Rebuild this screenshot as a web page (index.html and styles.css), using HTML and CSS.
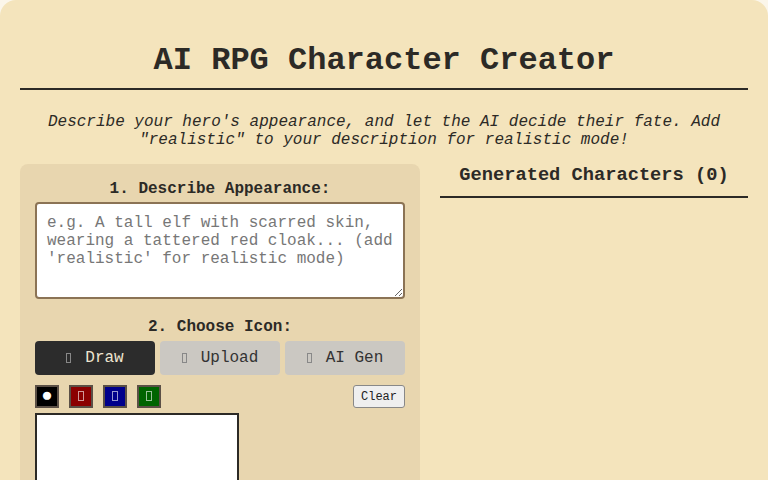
FILE: index.html
```html
<!DOCTYPE html>
<html lang="en">
<head>
  <meta charset="UTF-8" />
  <title>AI RPG Character Creator</title>
  <link rel="stylesheet" href="styles.css">
</head>
<body>
  <div class="container">
    <h1>AI RPG Character Creator</h1>
    <p class="intro">Describe your hero's appearance, and let the AI decide their fate. Add "realistic" to your description for realistic mode!</p>

    <div class="layout">
      <div class="creator">
        <label class="step" for="desc">1. Describe Appearance:</label>
        <textarea id="desc" placeholder="e.g. A tall elf with scarred skin, wearing a tattered red cloak... (add 'realistic' for realistic mode)"></textarea>

        <div class="step">2. Choose Icon:</div>
        <div class="tabs">
          <button class="tab active"><span class="tofu"></span>Draw</button>
          <button class="tab"><span class="tofu"></span>Upload</button>
          <button class="tab"><span class="tofu"></span>AI Gen</button>
        </div>

        <div class="palette">
          <button class="swatch black">●</button>
          <button class="swatch red"><span class="mini-tofu"></span></button>
          <button class="swatch blue"><span class="mini-tofu"></span></button>
          <button class="swatch green"><span class="mini-tofu"></span></button>
          <button class="clear">Clear</button>
        </div>
        <div class="canvas"></div>
      </div>

      <div class="results">
        <h3>Generated Characters (0)</h3>
      </div>
    </div>
  </div>
</body>
</html>
```

FILE: styles.css
```css
body { margin: 0; background: #fbf6ea; font-family: "Liberation Mono", "Courier New", monospace; color: #2c2a26; }
.container { background: #f4e4bc; border-radius: 16px; padding: 20px; min-height: 480px; box-sizing: border-box; }
h1 { font-size: 32px; text-align: center; margin: 23px 0 0; padding-bottom: 9px; border-bottom: 2px solid #2c2a26; line-height: 36px; }
.intro { font-style: italic; text-align: center; font-size: 16px; line-height: 18px; margin: 23px 0 15px; }
.layout { display: grid; grid-template-columns: 400px 1fr; gap: 20px; align-items: start; }
.creator { background: #e8d6af; border-radius: 8px; padding: 16px 15px 15px; }
.step { display: block; text-align: center; font-weight: bold; font-size: 16px; line-height: 18px; }
textarea { display: block; width: 100%; box-sizing: border-box; height: 97px; margin: 4px 0 19px; padding: 10px; border: 2px solid #8b7355; border-radius: 4px; font: 16px/18px "Liberation Mono", monospace; background: #fff; resize: vertical; }
textarea::placeholder { color: #777; }
.tabs { display: flex; gap: 5px; margin-top: 5px; }
.tab { flex: 1; height: 34px; border: none; border-radius: 4px; background: #cbc8c2; color: #333; font: 16px "Liberation Mono", monospace; cursor: pointer; }
.tab.active { background: #2c2c2c; color: #eee5d0; }
.tofu { display: inline-block; width: 5px; height: 10px; border: 1px solid #888; box-sizing: border-box; margin: 0 14px 0 0; vertical-align: -1px; }
.palette { display: flex; align-items: center; gap: 10px; margin: 10px 0 5px; }
.swatch { width: 24px; height: 23px; padding: 0; border: 2px solid #5b5046; font-size: 15px; line-height: 14px; color: #fff; }
.swatch.black { background: #000; padding-bottom: 3px; font-size: 19px; }
.swatch.red { background: #8b0000; }
.swatch.blue { background: #00008b; }
.swatch.green { background: #006400; }
.mini-tofu { display: inline-block; width: 4px; height: 8px; border: 1px solid rgba(255,255,255,0.6); margin-top: -3px; vertical-align: middle; }
.clear { margin-left: auto; font: 12px "Liberation Mono", monospace; height: 23px; padding: 1px 7px; background: #efefef; border: 1px solid #888; border-radius: 3px; color: #222; }
.canvas { width: 200px; height: 200px; border: 2px solid #2c2a26; background: #fff; }
.results h3 { margin: 0; font-size: 18.72px; line-height: 21px; text-align: center; padding: 1px 0 10px; border-bottom: 2px solid #2c2a26; }
```
